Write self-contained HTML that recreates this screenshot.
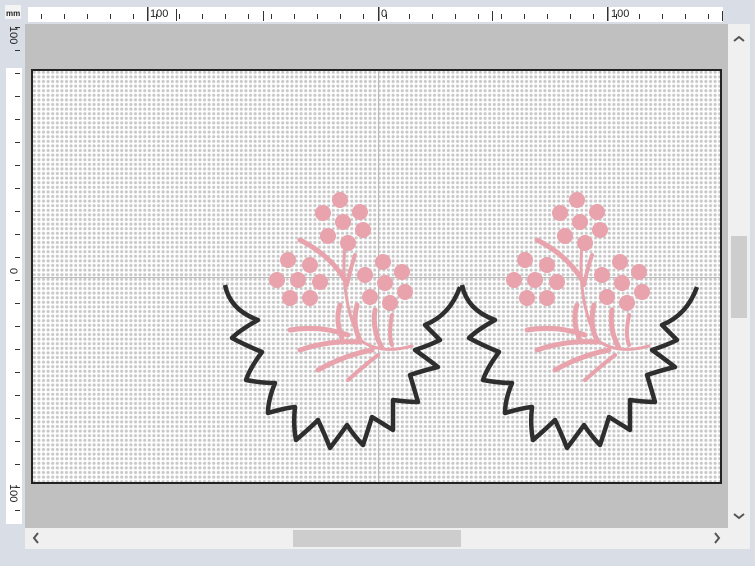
<!DOCTYPE html>
<html><head><meta charset="utf-8"><style>
body{margin:0;width:755px;height:566px;overflow:hidden;background:#d9dde5;font-family:"Liberation Sans",sans-serif;}
</style></head><body>
<svg width="755" height="566" xmlns="http://www.w3.org/2000/svg" style="position:absolute;left:0;top:0">
<defs>
<pattern id="dots" x="32" y="70" width="4.6" height="4.6" patternUnits="userSpaceOnUse">
<rect x="1.3" y="0.8" width="2" height="3" fill="#c8c8c8"/><rect x="0.8" y="1.3" width="3" height="2" fill="#c8c8c8"/>
</pattern>
<pattern id="tt" x="18" y="0" width="23" height="30" patternUnits="userSpaceOnUse"><rect x="0" y="14" width="1" height="5" fill="#333"/></pattern>
<pattern id="lt" x="0" y="27" width="30" height="23" patternUnits="userSpaceOnUse"><rect x="15" y="0" width="5" height="1" fill="#333"/></pattern>
</defs>
<rect x="0" y="0" width="755" height="566" fill="#d9dde5"/>
<rect x="28" y="7" width="695" height="15" fill="#fff"/>
<rect x="28" y="7" width="695" height="15" fill="url(#tt)"/>
<rect x="147" y="7" width="1.5" height="14" fill="#333"/><rect x="176" y="9" width="1" height="12" fill="#333"/>
<rect x="378" y="7" width="1.5" height="14" fill="#333"/><rect x="263" y="11" width="1" height="10" fill="#333"/>
<rect x="492" y="11" width="1" height="10" fill="#333"/><rect x="607" y="7" width="1.5" height="14" fill="#333"/>
<rect x="722" y="11" width="1" height="10" fill="#333"/>
<text x="150" y="17" font-size="11" fill="#222">100</text>
<text x="381" y="17" font-size="11" fill="#222">0</text>
<text x="611" y="17" font-size="11" fill="#222">100</text>
<rect x="5" y="5" width="16" height="14" fill="#f4f4f4"/>
<text x="6" y="16" font-size="8" font-weight="bold" fill="#222">mm</text>
<rect x="6" y="68" width="16" height="456" fill="#fff"/>
<rect x="6" y="24" width="16" height="500" fill="url(#lt)"/>
<text transform="translate(10,26) rotate(90)" font-size="11" fill="#222">100</text>
<text transform="translate(10,268) rotate(90)" font-size="11" fill="#222">0</text>
<text transform="translate(10,484) rotate(90)" font-size="11" fill="#222">100</text>
<rect x="25" y="24" width="703" height="504" fill="#c0c0c0"/>
<rect x="31" y="69" width="691" height="415" fill="#222"/>
<rect x="33" y="71" width="687" height="411" fill="#fff"/>
<rect x="33" y="71" width="687" height="411" fill="url(#dots)"/>
<rect x="378" y="71" width="1" height="411" fill="#bbb"/>
<rect x="33" y="277" width="687" height="1" fill="#bbb"/>
<rect x="728" y="24" width="22" height="504" fill="#f0f0f0"/>
<rect x="731" y="236" width="16" height="82" fill="#cdcdcd"/>
<path d="M734 41l5-4 5 4" stroke="#555" stroke-width="2" fill="none"/>
<path d="M734 514l5 4 5-4" stroke="#555" stroke-width="2" fill="none"/>
<rect x="25" y="528" width="725" height="21" fill="#f0f0f0"/>
<rect x="293" y="530" width="168" height="17" fill="#cdcdcd"/>
<path d="M38 533l-4 5 4 5" stroke="#555" stroke-width="2" fill="none"/>
<path d="M715 533l4 5-4 5" stroke="#555" stroke-width="2" fill="none"/>
<g id="m">
<path d="M225 285 Q230 310 258 320 Q240 330 232 338 Q245 345 262 352 Q250 368 246 380 Q262 383 275 383 Q268 400 268 413 Q285 408 295 407 Q293 425 296 440 Q310 428 318 420 Q325 435 330 448 Q340 435 347 425 Q355 437 363 445 Q368 430 372 417 Q385 425 393 430 Q393 412 393 400 Q408 402 418 402 Q414 388 410 375 Q425 370 438 367 Q425 357 415 350 Q430 345 440 340 Q432 332 425 325 Q450 315 460 287" stroke="#2e2e2e" stroke-width="4.5" fill="none" stroke-linejoin="round"/>
<g fill="#e8a3ad">
<circle cx="340" cy="200" r="8"/><circle cx="323" cy="213" r="8"/><circle cx="360" cy="212" r="8"/><circle cx="343" cy="222" r="8"/><circle cx="328" cy="236" r="8"/><circle cx="363" cy="230" r="8"/><circle cx="348" cy="243" r="8"/>
<circle cx="288" cy="260" r="8"/><circle cx="310" cy="265" r="8"/><circle cx="277" cy="280" r="8"/><circle cx="298" cy="280" r="8"/><circle cx="320" cy="282" r="8"/><circle cx="290" cy="298" r="8"/><circle cx="310" cy="298" r="8"/>
<circle cx="383" cy="262" r="8"/><circle cx="402" cy="272" r="8"/><circle cx="365" cy="275" r="8"/><circle cx="385" cy="283" r="8"/><circle cx="405" cy="292" r="8"/><circle cx="370" cy="297" r="8"/><circle cx="390" cy="303" r="8"/>
</g>
<g stroke="#e8a3ad" fill="none" stroke-linecap="round">
<path d="M345 245 Q340 300 360 340 Q380 355 412 346" stroke-width="3"/>
<path d="M300 240 Q330 255 345 280" stroke-width="5"/>
<path d="M355 255 Q350 270 347 285" stroke-width="4"/>
<path d="M290 330 Q320 325 348 335" stroke-width="5"/>
<path d="M300 350 Q330 340 360 342" stroke-width="5"/>
<path d="M318 370 Q345 355 372 350" stroke-width="5"/>
<path d="M348 380 Q365 365 378 355" stroke-width="4"/>
<path d="M340 305 Q335 320 342 338" stroke-width="5"/>
<path d="M357 305 Q352 325 360 340" stroke-width="5"/>
<path d="M375 310 Q372 330 382 348" stroke-width="5"/>
<path d="M392 315 Q388 335 392 345" stroke-width="4"/>
</g>
</g>
<use href="#m" transform="translate(237,0)"/>
</svg>
</body></html>
